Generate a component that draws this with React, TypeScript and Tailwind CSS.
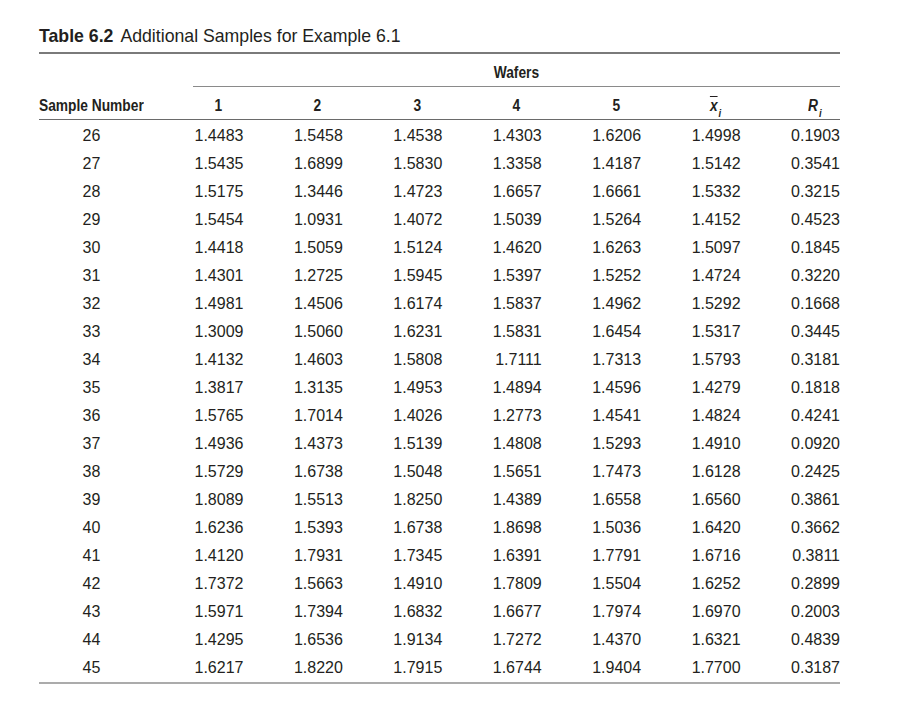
import React from "react";

const rows: [number, string[]][] = [
  [26, ["1.4483", "1.5458", "1.4538", "1.4303", "1.6206", "1.4998", "0.1903"]],
  [27, ["1.5435", "1.6899", "1.5830", "1.3358", "1.4187", "1.5142", "0.3541"]],
  [28, ["1.5175", "1.3446", "1.4723", "1.6657", "1.6661", "1.5332", "0.3215"]],
  [29, ["1.5454", "1.0931", "1.4072", "1.5039", "1.5264", "1.4152", "0.4523"]],
  [30, ["1.4418", "1.5059", "1.5124", "1.4620", "1.6263", "1.5097", "0.1845"]],
  [31, ["1.4301", "1.2725", "1.5945", "1.5397", "1.5252", "1.4724", "0.3220"]],
  [32, ["1.4981", "1.4506", "1.6174", "1.5837", "1.4962", "1.5292", "0.1668"]],
  [33, ["1.3009", "1.5060", "1.6231", "1.5831", "1.6454", "1.5317", "0.3445"]],
  [34, ["1.4132", "1.4603", "1.5808", "1.7111", "1.7313", "1.5793", "0.3181"]],
  [35, ["1.3817", "1.3135", "1.4953", "1.4894", "1.4596", "1.4279", "0.1818"]],
  [36, ["1.5765", "1.7014", "1.4026", "1.2773", "1.4541", "1.4824", "0.4241"]],
  [37, ["1.4936", "1.4373", "1.5139", "1.4808", "1.5293", "1.4910", "0.0920"]],
  [38, ["1.5729", "1.6738", "1.5048", "1.5651", "1.7473", "1.6128", "0.2425"]],
  [39, ["1.8089", "1.5513", "1.8250", "1.4389", "1.6558", "1.6560", "0.3861"]],
  [40, ["1.6236", "1.5393", "1.6738", "1.8698", "1.5036", "1.6420", "0.3662"]],
  [41, ["1.4120", "1.7931", "1.7345", "1.6391", "1.7791", "1.6716", "0.3811"]],
  [42, ["1.7372", "1.5663", "1.4910", "1.7809", "1.5504", "1.6252", "0.2899"]],
  [43, ["1.5971", "1.7394", "1.6832", "1.6677", "1.7974", "1.6970", "0.2003"]],
  [44, ["1.4295", "1.6536", "1.9134", "1.7272", "1.4370", "1.6321", "0.4839"]],
  [45, ["1.6217", "1.8220", "1.7915", "1.6744", "1.9404", "1.7700", "0.3187"]],
];

function HeadCell({ children }: { children: React.ReactNode }) {
  return (
    <div className="flex justify-end">
      <span className="w-[50px] text-center">
        <span className="inline-block scale-x-[0.86]">{children}</span>
      </span>
    </div>
  );
}

export default function App() {
  return (
    <div className="min-h-[719px] w-[915px] bg-white text-[#231f20] font-['Liberation_Sans',Arial,sans-serif]">
      <div className="ml-[39px] w-[801px] pt-[25px]">
        <div className="text-[17.7px] leading-[21px] h-[27px] pt-[1px] whitespace-nowrap">
          <span className="font-bold">Table 6.2</span>
          <span className="ml-[7px]">Additional Samples for Example 6.1</span>
        </div>
        <div className="h-[2px] bg-[#7a7a7a]" />
        <div className="grid grid-cols-[105px_repeat(7,1fr)]">
          <div className="h-[33px]" />
          <div className="col-span-7 ml-[49px] flex flex-col">
            <div className="h-[32px] flex items-center justify-center pt-[6px] text-[16px] font-bold">
              <span className="inline-block scale-x-[0.86]">Wafers</span>
            </div>
            <div className="h-px bg-[#8a8a8a]" />
          </div>
        </div>
        <div className="grid grid-cols-[105px_repeat(7,1fr)] h-[32px] items-center pt-[5px] text-[16px] font-bold">
          <div className="whitespace-nowrap">
            <span className="inline-block origin-left scale-x-[0.86]">Sample Number</span>
          </div>
          <HeadCell>1</HeadCell>
          <HeadCell>2</HeadCell>
          <HeadCell>3</HeadCell>
          <HeadCell>4</HeadCell>
          <HeadCell>5</HeadCell>
          <HeadCell>
            <span className="italic">
              <span className="overline">x</span>
              <sub className="text-[11px] align-[-4px] ml-[1px]">i</sub>
            </span>
          </HeadCell>
          <HeadCell>
            <span className="italic">
              R<sub className="text-[11px] align-[-4px] ml-[1px]">i</sub>
            </span>
          </HeadCell>
        </div>
        <div className="h-px bg-[#6a6a6a]" />
        <div className="flex flex-col text-[16px]">
          {rows.map(([n, vals]) => (
            <div key={n} className="grid grid-cols-[105px_repeat(7,1fr)] h-[28px] items-center pt-[4px]">
              <div className="text-center">{n}</div>
              {vals.map((v, i) => (
                <div key={i} className="text-right">
                  {v}
                </div>
              ))}
            </div>
          ))}
        </div>
        <div className="mt-[2px] h-[2px] bg-[#ababab]" />
      </div>
    </div>
  );
}
